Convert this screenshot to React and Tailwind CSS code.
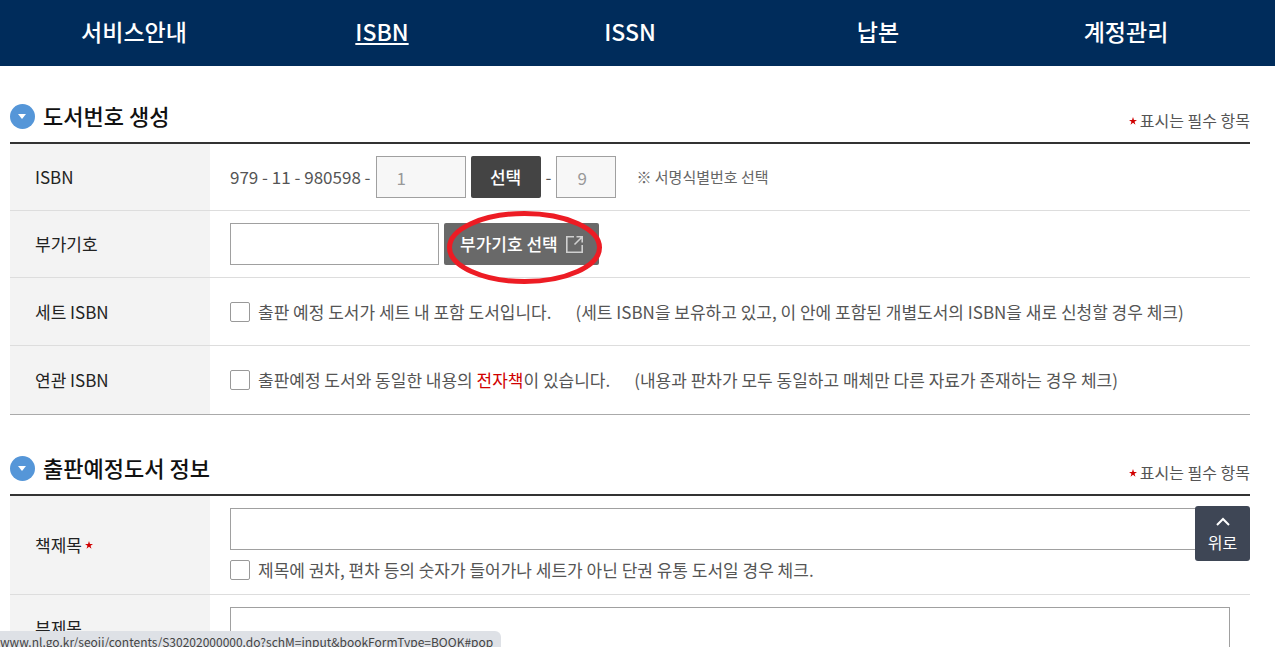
import { useState } from "react";

const menuItems = [
  { label: "서비스안내", href: "#service" },
  { label: "ISBN", href: "#isbn", active: true },
  { label: "ISSN", href: "#issn" },
  { label: "납본", href: "#deposit" },
  { label: "계정관리", href: "#account" },
];

const inputClass = "h-[42px] border border-[#a0a0a0] px-5 text-[17px] outline-none";

function RequiredMark() {
  return (
    <svg viewBox="0 0 10 10" className="inline-block size-2 shrink-0" fill="#d00000" aria-hidden="true">
      <path d="M5 0 6.2 3.6H10L6.9 5.9 8.1 9.6 5 7.3 1.9 9.6 3.1 5.9 0 3.6H3.8Z" />
    </svg>
  );
}

function PopupIcon() {
  return (
    <svg viewBox="0 0 17 17" className="size-[17px]" fill="none" stroke="#d0d0d0" strokeWidth="1.6" aria-hidden="true">
      <path d="M8 .8H.8v15.4h15.4V9" />
      <path d="M8.5 8.5 15.8 1.2M10.5.8h5.7v5.7" />
    </svg>
  );
}

function Section({ title, children }) {
  return (
    <section>
      <div className="flex items-start justify-between pb-[9px]">
        <h2 className="flex items-start gap-2 text-[22px] leading-[23px] font-medium text-[#111]">
          <svg viewBox="0 0 25 25" className="size-[25px]" aria-hidden="true">
            <circle cx="12.5" cy="12.5" r="12.5" fill="#5596d8" />
            <path d="M8 10h8l-4 5Z" fill="#fff" />
          </svg>
          {title}
        </h2>
        <p className="flex items-center gap-[3px] pt-1 text-base leading-[25px] text-[#555]">
          <RequiredMark />
          표시는 필수 항목
        </p>
      </div>
      <table className="w-full border-collapse border-t-2 border-[#333] text-left text-[17px] leading-6">
        <tbody>{children}</tbody>
      </table>
    </section>
  );
}

function Row({ label, htmlFor, required, className = "border-[#ddd]", children }) {
  return (
    <tr className={`border-b ${className}`}>
      <th scope="row" className="w-[200px] bg-[#f3f3f3] pl-[25px] font-normal text-[#222]">
        <label htmlFor={htmlFor} className="flex items-center gap-[3px]">
          {label}
          {required && <RequiredMark />}
        </label>
      </th>
      <td className="px-5 py-3 text-[#555]">{children}</td>
    </tr>
  );
}

function CheckField({ id, children, note }) {
  const [checked, setChecked] = useState(false);

  return (
    <div className="flex items-center gap-6">
      <label htmlFor={id} className="flex items-center gap-2">
        <input
          id={id}
          type="checkbox"
          checked={checked}
          onChange={(e) => setChecked(e.target.checked)}
          className="size-5 shrink-0 appearance-none rounded-xs border border-[#999] bg-white checked:bg-[#5596d8]"
        />
        <span>{children}</span>
      </label>
      {note && <span>{note}</span>}
    </div>
  );
}

export default function App() {
  return (
    <div className="h-screen overflow-hidden bg-white font-['Noto_Sans_CJK_KR',sans-serif]">
      <header className="bg-[#002c5b] pr-[25px] pl-[10px]">
        <nav className="grid h-[66px] grid-cols-5 items-center pb-1 text-center">
          {menuItems.map((item) => (
            <a
              key={item.label}
              href={item.href}
              className={`text-[23px] font-medium text-white ${
                item.active ? "underline decoration-2 underline-offset-2" : ""
              }`}
            >
              {item.label}
            </a>
          ))}
        </nav>
      </header>

      <main className="flex flex-col gap-[41px] pt-[38px] pr-[25px] pl-[10px]">
        <Section title="도서번호 생성">
          <Row label="ISBN" htmlFor="titleNo">
            <div className="flex items-center gap-[5px]">
              <span>979 - 11 - 980598 -</span>
              <input
                id="titleNo"
                defaultValue="1"
                readOnly
                className={`${inputClass} w-[90px] bg-[#f7f7f7] text-[#999]`}
              />
              <button type="button" className="h-[42px] w-[70px] rounded-xs bg-[#444] font-medium text-white">
                선택
              </button>
              <span>-</span>
              <input
                aria-label="체크기호"
                defaultValue="9"
                readOnly
                className={`${inputClass} w-[60px] bg-[#f7f7f7] text-[#999]`}
              />
              <span className="pl-[15px] text-[15px] text-[#666]">※ 서명식별번호 선택</span>
            </div>
          </Row>
          <Row label="부가기호" htmlFor="addCode">
            <div className="flex items-center gap-[5px]">
              <input id="addCode" className={`${inputClass} w-[209px]`} />
              <div className="relative">
                <button
                  type="button"
                  className="flex h-[42px] items-center gap-2 rounded-xs bg-[#696969] px-4 font-medium text-white"
                >
                  부가기호 선택
                  <PopupIcon />
                </button>
                <svg
                  viewBox="0 0 155 73"
                  className="pointer-events-none absolute -top-3 left-[3px] h-[73px] w-[155px]"
                  aria-hidden="true"
                >
                  <ellipse cx="77.5" cy="36.5" rx="75" ry="34" fill="none" stroke="#ed1c24" strokeWidth="5" />
                </svg>
              </div>
            </div>
          </Row>
          <Row label="세트 ISBN" htmlFor="setIsbn" className="h-[68px] border-[#ddd]">
            <CheckField
              id="setIsbn"
              note="(세트 ISBN을 보유하고 있고, 이 안에 포함된 개별도서의 ISBN을 새로 신청할 경우 체크)"
            >
              출판 예정 도서가 세트 내 포함 도서입니다.
            </CheckField>
          </Row>
          <Row label="연관 ISBN" htmlFor="relIsbn" className="h-[69px] border-[#aaa]">
            <CheckField id="relIsbn" note="(내용과 판차가 모두 동일하고 매체만 다른 자료가 존재하는 경우 체크)">
              출판예정 도서와 동일한 내용의 <em className="text-[#d00000] not-italic">전자책</em>이 있습니다.
            </CheckField>
          </Row>
        </Section>

        <Section title="출판예정도서 정보">
          <Row label="책제목" htmlFor="bookTitle" required>
            <div className="flex flex-col gap-2">
              <input id="bookTitle" className={`${inputClass} w-full`} />
              <CheckField id="singleBook">
                제목에 권차, 편차 등의 숫자가 들어가나 세트가 아닌 단권 유통 도서일 경우 체크.
              </CheckField>
            </div>
          </Row>
          <Row label="부제목" htmlFor="subTitle">
            <input id="subTitle" className={`${inputClass} block w-full`} />
          </Row>
        </Section>
      </main>

      <button
        type="button"
        onClick={() => window.scrollTo({ top: 0 })}
        className="fixed right-[25px] bottom-[86px] flex size-[55px] flex-col items-center justify-center gap-1 rounded-[3px] bg-[#3e4655] pt-[3px] text-base leading-6 text-white"
      >
        <svg viewBox="0 0 14 9" className="h-[9px] w-[14px]" fill="none" stroke="currentColor" strokeWidth="2" aria-hidden="true">
          <path d="M1 8 7 2l6 6" />
        </svg>
        위로
      </button>

      <div className="fixed bottom-0 left-0 h-4 overflow-hidden rounded-tr-md bg-[#dee1e6] pt-[3px] pr-2 text-xs text-[#444]">
        www.nl.go.kr/seoji/contents/S30202000000.do?schM=input&amp;bookFormType=BOOK#pop
      </div>
    </div>
  );
}
